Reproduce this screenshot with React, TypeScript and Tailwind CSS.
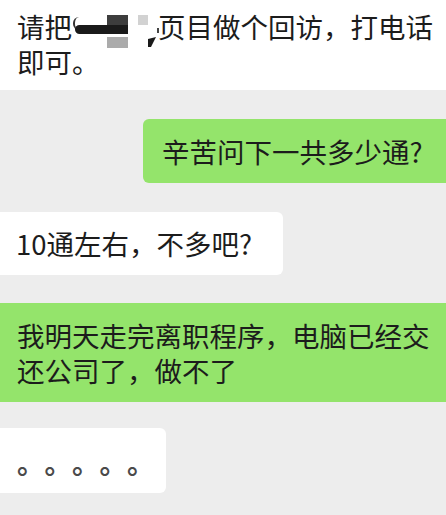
export default function App() {
  return (
    <div className="min-h-[515px] w-[446px] overflow-hidden bg-[#ededed] font-['Noto_Sans_CJK_SC',sans-serif] text-[27.5px] leading-[35px] text-[#1c1c1c] [text-spacing-trim:space-all]">
      {/* incoming, cut at top */}
      <div className="bg-white pl-[17px] pt-[9px] pb-[11px]">
        <div className="whitespace-nowrap">
          请把
          {/* redacted name */}
          <span className="inline-flex h-[35px] w-[86px] items-start align-top">
            <span className="mt-[8px] ml-[1px] h-[13px] w-[6px] shrink-0 rounded-l-full border-l-2 border-[#333]" />
            <span className="mt-[16px] -ml-[4px] h-[9px] w-[32px] shrink-0 rounded-l-full bg-[#1a1a1a]" />
            <span className="mt-[6px] flex w-[21px] shrink-0 flex-col">
              <span className="h-[10px] bg-[#3d3d3d]" />
              <span className="h-[9px] bg-[#1a1a1a]" />
              <span className="mt-[3px] h-[11px] bg-[#ababab]" />
            </span>
            <span className="mt-[6px] ml-[10px] h-[10px] w-[10px] shrink-0 bg-[#d2d2d2]" />
            <svg className="mt-[28px] -ml-[1px] shrink-0" width="9" height="10" viewBox="0 0 9 10">
              <polygon points="1,2 9,0 4,10 1,10" fill="#1a1a1a" />
            </svg>
            <span className="mt-[19px] ml-[1px] h-[5px] w-[2px] shrink-0 bg-[#444]" />
          </span>
          页目做个回访，打电话
        </div>
        <div>即可。</div>
      </div>

      <div className="mt-[29px] ml-[143px] whitespace-nowrap rounded-l-[6px] bg-[#94e46b] py-[14.5px] pl-[19px]">
        辛苦问下一共多少通?
      </div>

      <div className="mt-[29px] w-[283px] whitespace-nowrap rounded-r-[6px] bg-white py-[14px] pl-[16px]">
        10通左右，不多吧?
      </div>

      <div className="mt-[28px] bg-[#94e46b] py-[14.5px] pl-[17px]">
        <div className="whitespace-nowrap">我明天走完离职程序，电脑已经交</div>
        <div>还公司了，做不了</div>
      </div>

      <div className="mt-[26px] w-[166px] whitespace-nowrap rounded-r-[6px] bg-white pt-[17px] pb-[13px] pl-[17px] font-bold text-[#4a4a4a]">
        。。。。。
      </div>
    </div>
  );
}
